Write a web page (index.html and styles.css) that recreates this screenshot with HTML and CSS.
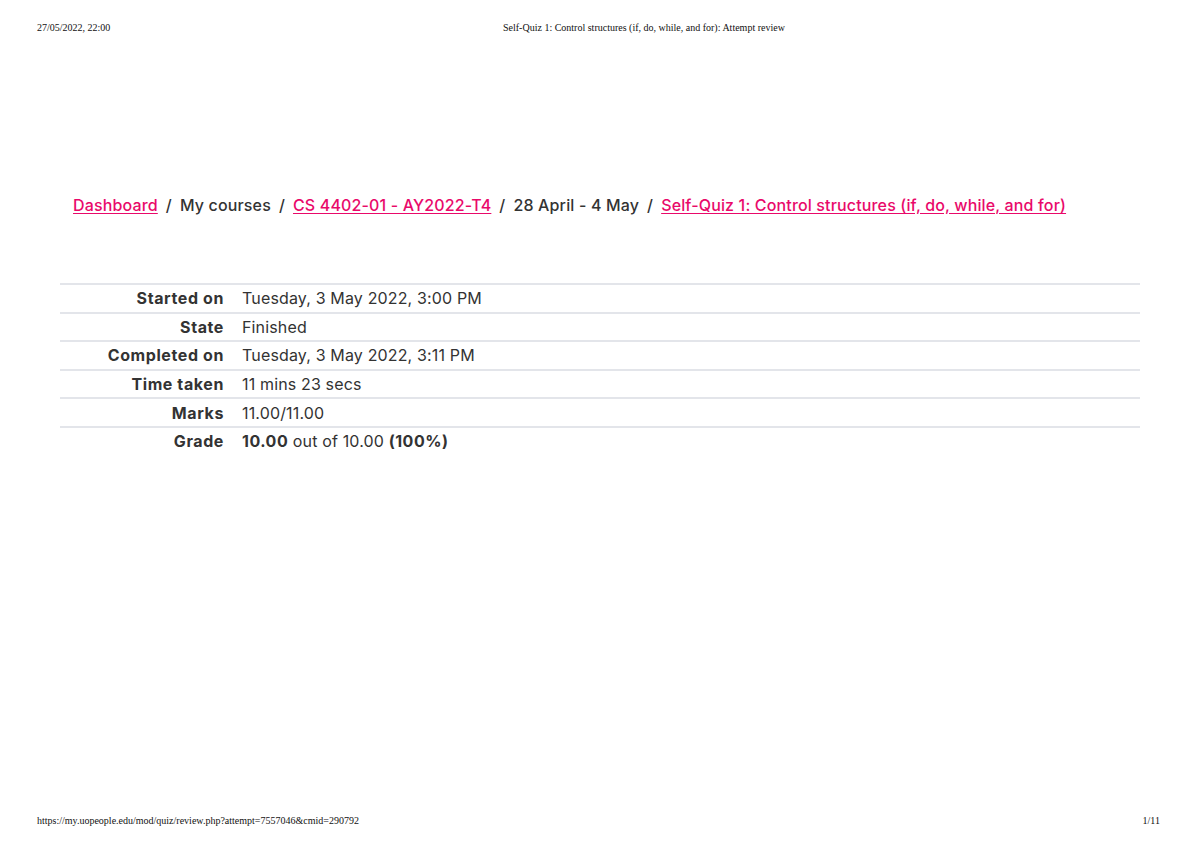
FILE: index.html
```html
<!DOCTYPE html>
<html>
<head>
<meta charset="utf-8">
<link rel="stylesheet" href="styles.css">
</head>
<body>
<div class="page">
  <header class="print-head">
    <span class="head-date">27/05/2022, 22:00</span>
    <span class="head-title">Self-Quiz 1: Control structures (if, do, while, and for): Attempt review</span>
  </header>
  <main class="content">
    <nav class="crumbs">
      <a href="#">Dashboard</a><span class="sep">/</span><span>My courses</span><span class="sep">/</span><a href="#">CS 4402-01 - AY2022-T4</a><span class="sep">/</span><span>28 April - 4 May</span><span class="sep">/</span><a href="#">Self-Quiz 1: Control structures (if, do, while, and for)</a>
    </nav>
    <table class="summary">
      <tr><th>Started on</th><td>Tuesday, 3 May 2022, 3:00 PM</td></tr>
      <tr><th>State</th><td>Finished</td></tr>
      <tr><th>Completed on</th><td>Tuesday, 3 May 2022, 3:11 PM</td></tr>
      <tr><th>Time taken</th><td>11 mins 23 secs</td></tr>
      <tr><th>Marks</th><td>11.00/11.00</td></tr>
      <tr><th>Grade</th><td><b>10.00</b> out of 10.00 <b>(100%)</b></td></tr>
    </table>
  </main>
  <footer class="print-foot">
    <span>https://my.uopeople.edu/mod/quiz/review.php?attempt=7557046&amp;cmid=290792</span>
    <span>1/11</span>
  </footer>
</div>
</body>
</html>
```
FILE: styles.css
```css
html, body { margin: 0; padding: 0; background: #fff; }
.page {
  width: 1200px; height: 849px;
  display: flex; flex-direction: column;
  box-sizing: border-box;
}
.print-head {
  display: flex; align-items: center;
  height: 20px; margin-top: 17px;
  padding: 0 37px;
  font-family: "Liberation Serif", serif; font-size: 10px; color: #111;
}
.head-date { width: 466px; }
.content { flex: 1; padding: 0 60px; }
.crumbs {
  margin-top: 156px;
  padding-left: 13px;
  font-family: Inter, "Liberation Sans", sans-serif;
  font-size: 16px; font-weight: 500; color: #333;
  letter-spacing: 0.15px;
  line-height: 24px;
}
.crumbs a { color: #e9096a; text-decoration: underline; text-underline-offset: 2px; }
.crumbs .sep { margin: 0 8px; color: #333; }
.summary {
  margin-top: 66px;
  width: 100%;
  border-collapse: collapse;
  font-family: Inter, "Liberation Sans", sans-serif;
  font-size: 16px; color: #333;
  letter-spacing: 0.15px;
}
.summary tr { border-top: 2px solid #e3e5ea; }
.summary th, .summary td { height: 26.6px; padding: 0; line-height: 26px; vertical-align: middle; }
.summary th {
  width: 164px; text-align: right; font-weight: 700;
  padding-right: 18px; box-sizing: content-box;
  letter-spacing: 0.6px;
}
.summary td { text-align: left; }
.summary td b { letter-spacing: 0.5px; }
.print-foot {
  display: flex; justify-content: space-between; align-items: center;
  height: 20px; margin-bottom: 19px;
  padding: 0 40px 0 37px;
  font-family: "Liberation Serif", serif; font-size: 10px; color: #111;
}
```
